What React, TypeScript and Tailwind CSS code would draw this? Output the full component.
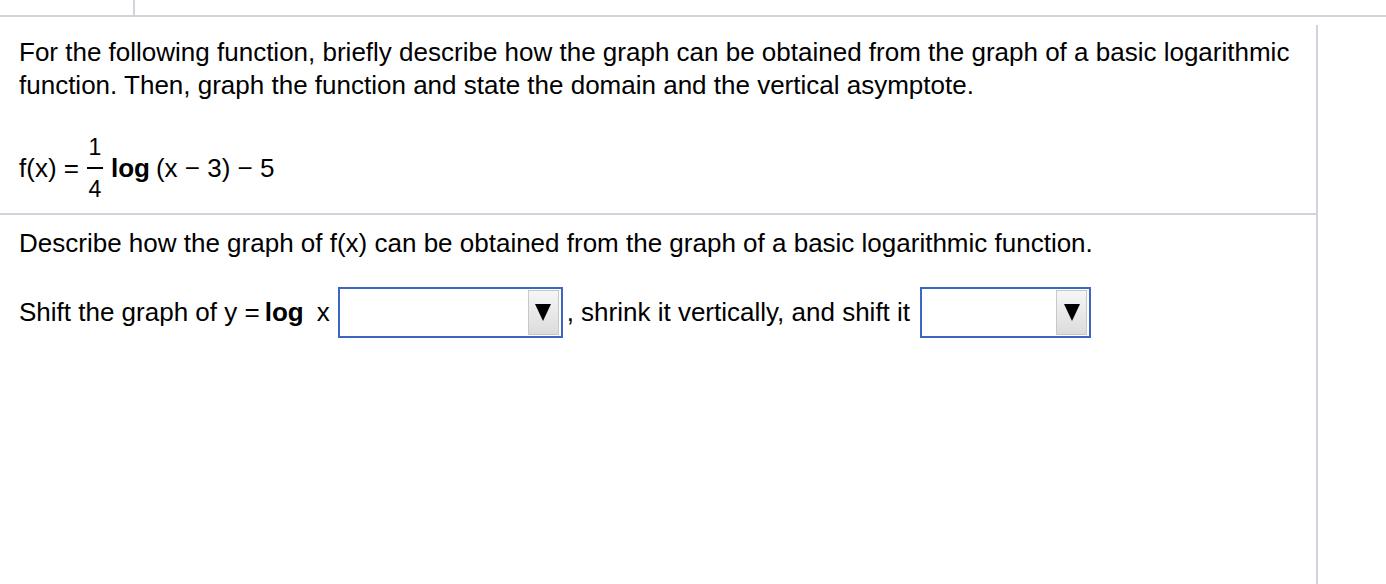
import { ReactNode } from 'react'

const LINE = 'bg-[#d0d3de]'

function Dropdown({ width }: { width: string }) {
  return (
    <span
      className={`inline-flex h-[51px] items-center justify-end border-2 border-[#3d65c6] bg-white pr-[2px] align-middle ${width}`}
    >
      <span className="flex h-[45px] w-[31px] items-center justify-center border border-[#c8c8c8] bg-gradient-to-b from-[#f6f6f6] to-[#dcdcdc]">
        <svg width="16" height="17" viewBox="0 0 16 17">
          <path d="M0 0 L16 0 L8 17 Z" fill="#000" />
        </svg>
      </span>
    </span>
  )
}

function Frac({ top, bottom }: { top: ReactNode; bottom: ReactNode }) {
  return (
    <span className="mx-[8px] inline-flex flex-col items-center text-[23px] leading-[30px]">
      <span>{top}</span>
      <span className="my-[5px] h-[2px] w-[16px] bg-black" />
      <span>{bottom}</span>
    </span>
  )
}

export default function App() {
  return (
    <div className="flex h-[584px] w-[1386px] flex-col overflow-hidden bg-white font-['Liberation_Sans',Arial,sans-serif] text-[26px] leading-[33px] text-black">
      <div className="flex h-[15px] shrink-0">
        <div className={`ml-[133px] w-[2px] ${LINE}`} />
      </div>
      <div className={`h-[2px] shrink-0 ${LINE}`} />

      <div className="mt-[8px] flex flex-1">
        <div className="w-[1316px]">
          <p className="pl-[19px] pr-[20px] pt-[11px]">
            For the following function, briefly describe how the graph can be obtained from the graph of a basic logarithmic
            function. Then, graph the function and state the domain and the vertical asymptote.
          </p>

          <div className="mt-[26px] flex h-[80px] items-center pl-[19px]">
            <span>f(x) =</span>
            <Frac top="1" bottom="4" />
            <span className="font-bold">log</span>
            <span className="ml-[6px]">(x − 3) − 5</span>
          </div>

          <div className={`mt-[5px] h-[2px] ${LINE}`} />

          <p className="mt-[12px] pl-[19px]">
            Describe how the graph of f(x) can be obtained from the graph of a basic logarithmic function.
          </p>

          <div className="mt-[27px] flex items-center pl-[19px]">
            <span>Shift the graph of y =</span>
            <span className="ml-[5px] font-bold">log</span>
            <span className="ml-[13px] mr-[8px]">x</span>
            <Dropdown width="w-[225px]" />
            <span className="ml-[4px] mr-[10px]">, shrink it vertically, and shift it</span>
            <Dropdown width="w-[171px]" />
          </div>
        </div>
        <div className={`w-[2px] ${LINE}`} />
      </div>
    </div>
  )
}
